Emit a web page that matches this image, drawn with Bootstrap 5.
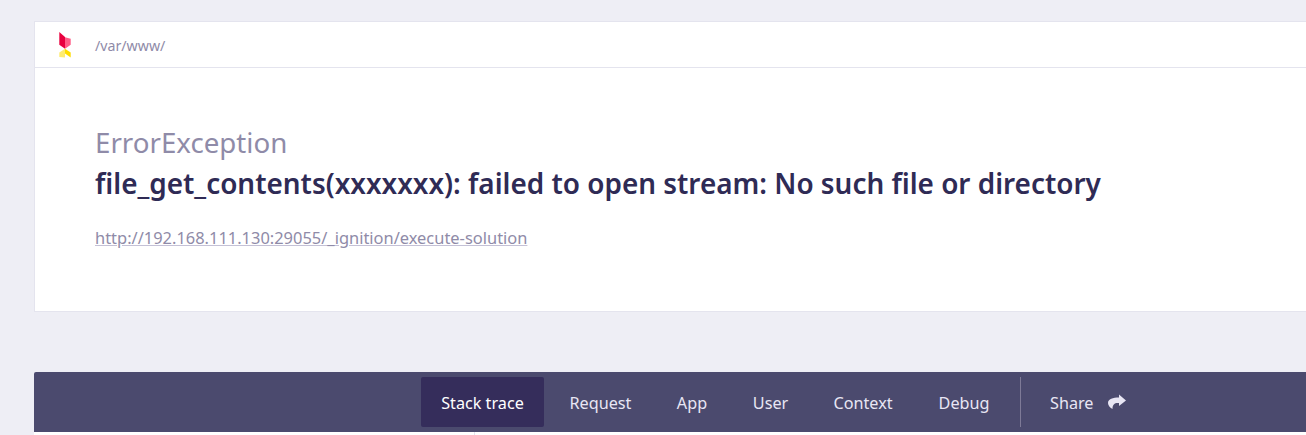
<!DOCTYPE html>
<html lang="en">
<head>
    <meta charset="UTF-8">
    <meta name="viewport" content="width=device-width, initial-scale=1.0">
    <title>ErrorException</title>
    <link href="https://cdn.jsdelivr.net/npm/bootstrap@5.3.0/dist/css/bootstrap.min.css" rel="stylesheet">
    <style>
        html, body {
            height: 435px;
            overflow: hidden;
        }
        body {
            background: #eeeef5;
            padding: 21px 0 0 34px;
            font-family: "Noto Sans", "Open Sans", sans-serif;
        }
        .err-card {
            background: #fff;
            border: 1px solid #e4e4ee;
            border-right: 0;
            height: 291px;
        }
        .err-top {
            height: 46px;
            padding-left: 22px;
            border-bottom: 1px solid #e4e4ee;
        }
        .err-path {
            margin-left: 22px;
            padding-top: 2px;
            font-size: 14.2px;
            color: #8f8ba8;
        }
        .err-body {
            padding: 55px 0 0 60px;
        }
        .err-type {
            font-size: 27.7px;
            line-height: 38px;
            color: #8f8ba8;
        }
        .err-msg {
            font-size: 27.9px;
            line-height: 40px;
            font-weight: 600;
            color: #2f2b55;
            margin: 2px 0 0;
        }
        .err-url {
            display: inline-block;
            margin-top: 23px;
            font-size: 16.45px;
            line-height: 24px;
            color: #8f8ba8;
            text-decoration-color: #c4c1d6;
        }
        .tab-bar {
            margin-top: 60px;
            height: 60px;
            background: #4b4a6e;
            border-radius: 2px 0 0 0;
            padding: 5px 0 5px 387px;
            gap: 5px;
        }
        .tab-item {
            padding-top: 2px;
            font-size: 16.2px;
            color: #e8e6f4;
            border-radius: 2px;
        }
        .tab-on {
            background: #352d5b;
            color: #fff;
            width: 123px;
            margin-right: 1px;
        }
        .tab-request { width: 101px; }
        .tab-app { width: 72px; }
        .tab-user { width: 75px; }
        .tab-context { width: 100px; }
        .tab-debug { width: 92px; }
        .tab-sep {
            width: 1px;
            background: #7e7a97;
            margin-left: 5px;
        }
        .tab-share {
            margin-left: 24px;
        }
        .tab-share svg {
            margin-left: 15px;
            margin-top: -2px;
        }
        .trace-area {
            height: 3px;
            background: #fff;
        }
        .trace-frames {
            width: 441px;
            border-right: 1px solid #e4e4ee;
        }
    </style>
</head>
<body>
    <div class="err-card">
        <div class="err-top d-flex align-items-center">
            <svg width="16" height="26" viewBox="0 0 16 26">
                <polygon points="2.300,0 8,5 8,16.800 2.300,12.800" fill="#e8003f"/>
                <polygon points="8,5.200 13.700,6.800 13.700,12.800 8,16.800" fill="#ff5c86"/>
                <polygon points="8,16.800 2.300,20.500 2.300,25 8,25.500" fill="#ffec70"/>
                <polygon points="8,16.800 13.700,20.500 13.700,25.500 8,21.500" fill="#ffdc00"/>
            </svg>
            <span class="err-path">/var/www/</span>
        </div>
        <div class="err-body">
            <div class="err-type">ErrorException</div>
            <h1 class="err-msg">file_get_contents(xxxxxxx): failed to open stream: No such file or directory</h1>
            <a class="err-url" href="#">http://192.168.111.130:29055/_ignition/execute-solution</a>
        </div>
    </div>
    <nav class="tab-bar d-flex align-items-stretch">
        <div class="tab-item tab-on d-flex align-items-center justify-content-center">Stack trace</div>
        <div class="tab-item tab-request d-flex align-items-center justify-content-center">Request</div>
        <div class="tab-item tab-app d-flex align-items-center justify-content-center">App</div>
        <div class="tab-item tab-user d-flex align-items-center justify-content-center">User</div>
        <div class="tab-item tab-context d-flex align-items-center justify-content-center">Context</div>
        <div class="tab-item tab-debug d-flex align-items-center justify-content-center">Debug</div>
        <div class="tab-sep"></div>
        <div class="tab-item tab-share d-flex align-items-center">Share
            <svg width="18" height="16" viewBox="0 0 18 16"><path d="M11 0.500 L18 6.500 L11 12 L11 9 C7 8.500 4.500 10 4.500 15 C1.500 13.500 0 11 0 9 C0 5 5 3.500 11 3.500 Z" fill="#e8e6f4"/></svg>
        </div>
    </nav>
    <div class="trace-area d-flex">
        <div class="trace-frames"></div>
    </div>
    <script src="https://cdn.jsdelivr.net/npm/bootstrap@5.3.0/dist/js/bootstrap.bundle.min.js"></script>
</body>
</html>
